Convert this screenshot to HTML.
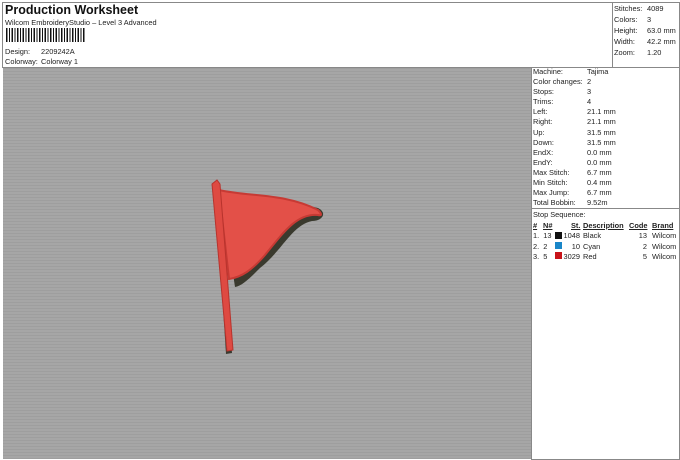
<!DOCTYPE html>
<html><head><style>
body{margin:0;width:680px;height:459px;background:#fff;font-family:"Liberation Sans",sans-serif;position:relative;overflow:hidden;color:#222}
.a{position:absolute;white-space:nowrap;font-size:7.4px}
.box{position:absolute;border:1px solid #888;box-sizing:border-box}
</style></head><body>
<div class="box" style="left:2px;top:2px;width:678px;height:66px"></div>
<div class="box" style="left:612px;top:2px;width:68px;height:66px;border-color:#888"></div>
<div class="a" style="left:5px;top:3px;font-size:12.5px;font-weight:bold;color:#111">Production Worksheet</div>
<div class="a" style="left:5px;top:18px">Wilcom EmbroideryStudio – Level 3 Advanced</div>
<div class="a" style="left:6px;top:28px;width:80px;height:14px;background:repeating-linear-gradient(90deg,#111 0 1.5px,#fff 1.5px 3px,#111 3px 4px,#fff 4px 5.5px)"></div>
<div class="a" style="left:5px;top:47px">Design:</div><div class="a" style="left:41px;top:47px">2209242A</div>
<div class="a" style="left:5px;top:57px">Colorway:</div><div class="a" style="left:41px;top:57px">Colorway 1</div>
<div class="a" style="left:614px;top:3px;line-height:11px">Stitches:<br>Colors:<br>Height:<br>Width:<br>Zoom:</div>
<div class="a" style="left:647px;top:3px;line-height:11px">4089<br>3<br>63.0 mm<br>42.2 mm<br>1.20</div>
<div style="position:absolute;left:3px;top:68px;width:528px;height:391px;background:#a6a6a6;background-image:repeating-linear-gradient(0deg,rgba(0,0,0,.05) 0 1px,transparent 1px 3px)"></div>
<div class="box" style="left:531px;top:67px;width:149px;height:142px"></div>
<div class="box" style="left:531px;top:208px;width:149px;height:252px"></div>
<div class="a" style="left:533px;top:67px;line-height:10.1px">Machine:<br>Color changes:<br>Stops:<br>Trims:<br>Left:<br>Right:<br>Up:<br>Down:<br>EndX:<br>EndY:<br>Max Stitch:<br>Min Stitch:<br>Max Jump:<br>Total Bobbin:</div>
<div class="a" style="left:587px;top:67px;line-height:10.1px">Tajima<br>2<br>3<br>4<br>21.1 mm<br>21.1 mm<br>31.5 mm<br>31.5 mm<br>0.0 mm<br>0.0 mm<br>6.7 mm<br>0.4 mm<br>6.7 mm<br>9.52m</div>
<div class="a" style="left:533px;top:210px">Stop Sequence:</div>
<div class="a" style="left:533px;top:221px;font-weight:bold;text-decoration:underline">#</div>
<div class="a" style="left:543px;top:221px;font-weight:bold;text-decoration:underline">N#</div>
<div class="a" style="left:571px;top:221px;font-weight:bold;text-decoration:underline">St.</div>
<div class="a" style="left:583px;top:221px;font-weight:bold;text-decoration:underline">Description</div>
<div class="a" style="left:629px;top:221px;font-weight:bold;text-decoration:underline">Code</div>
<div class="a" style="left:652px;top:221px;font-weight:bold;text-decoration:underline">Brand</div>
<div class="a" style="left:533px;top:231px;line-height:10.5px">1.&nbsp; 13<br>2.&nbsp; 2<br>3.&nbsp; 5</div>
<div class="a" style="left:555px;top:232px;width:7px;height:7px;background:#111"></div>
<div class="a" style="left:555px;top:242px;width:7px;height:7px;background:#1a86c8"></div>
<div class="a" style="left:555px;top:252px;width:7px;height:7px;background:#c8141a"></div>
<div class="a" style="left:562px;top:231px;line-height:10.5px;width:18px;text-align:right">1048<br>10<br>3029</div>
<div class="a" style="left:583px;top:231px;line-height:10.5px">Black<br>Cyan<br>Red</div>
<div class="a" style="left:630px;top:231px;line-height:10.5px;width:17px;text-align:right">13<br>2<br>5</div>
<div class="a" style="left:652px;top:231px;line-height:10.5px">Wilcom<br>Wilcom<br>Wilcom</div>
<svg style="position:absolute;left:0;top:0" width="680" height="459">
<path d="M219,192 C250,198 280,196 316,205 C326,210 320,218 310,218 C290,222 280,248 258,265 C248,275 240,283 233,284 Z" fill="#3a3a2e" transform="translate(2,3)"/>
<path d="M217,184 L220,184 L234,352 L228,353 Z" fill="#3a3a30" transform="translate(-2,1)"/>
<path d="M219,190 C250,197 285,193 318,210 C322,214 322,216 318,215 C298,213 285,230 265,255 C252,270 242,277 229,279 Z" fill="#e35048" stroke="#c73a34" stroke-width="2"/>
<path d="M212,184 L217,180 L220,184 L233,350 L227,351 Z" fill="#de4a42" stroke="#b8332d" stroke-width="1"/>
</svg>
</body></html>
